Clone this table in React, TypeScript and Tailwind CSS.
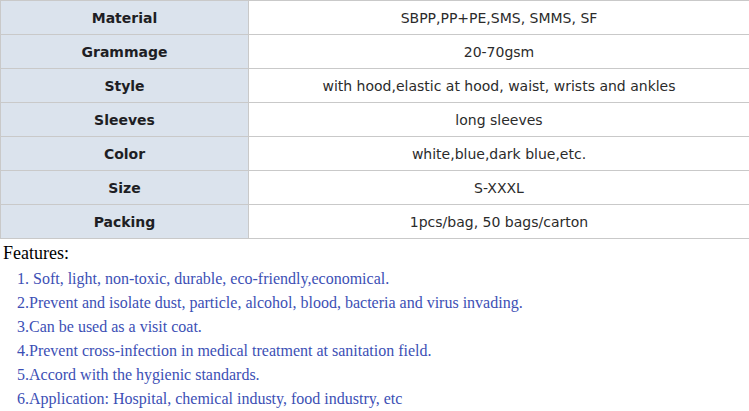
import React from 'react';

const specs: [string, string][] = [
  ['Material', 'SBPP,PP+PE,SMS, SMMS, SF'],
  ['Grammage', '20-70gsm'],
  ['Style', 'with hood,elastic at hood, waist, wrists and ankles'],
  ['Sleeves', 'long sleeves'],
  ['Color', 'white,blue,dark blue,etc.'],
  ['Size', 'S-XXXL'],
  ['Packing', '1pcs/bag, 50 bags/carton'],
];

const features = [
  '1. Soft, light, non-toxic, durable, eco-friendly,economical.',
  '2.Prevent and isolate dust, particle, alcohol, blood, bacteria and virus invading.',
  '3.Can be used as a visit coat.',
  '4.Prevent cross-infection in medical treatment at sanitation field.',
  '5.Accord with the hygienic standards.',
  '6.Application: Hospital, chemical industy, food industry, etc',
];

export default function App() {
  return (
    <div className="w-[749px] h-[411px] bg-white overflow-hidden">
      {/* Spec table */}
      <div className="border-t border-l border-[#c9c9c9] font-['DejaVu_Sans',Verdana,sans-serif] text-[14px]">
        {specs.map(([label, value]) => (
          <div key={label} className="flex h-[34px] border-b border-[#c9c9c9]">
            <div className="w-[248px] shrink-0 bg-[#dbe3ed] border-r border-[#c9c9c9] flex items-center justify-center pt-[2px] font-bold text-[#1e1e24]">
              {label}
            </div>
            <div className="flex-1 flex items-center justify-center pt-[2px] text-[#2b2b2b]">
              {value}
            </div>
          </div>
        ))}
      </div>

      {/* Features */}
      <div className="pt-[1px] font-['Liberation_Serif','Times_New_Roman',serif]">
        <div className="pl-[3px] h-[27px] leading-[26px] text-[18px] text-black">Features:</div>
        {features.map((f) => (
          <div key={f} className="pl-[17px] h-[24px] leading-[24px] text-[16px] text-[#3c4fb5]">
            {f}
          </div>
        ))}
      </div>
    </div>
  );
}
